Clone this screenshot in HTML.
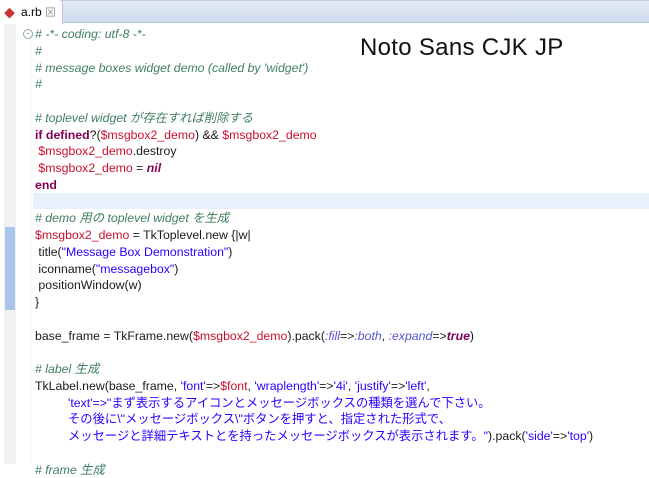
<!DOCTYPE html>
<html><head><meta charset="utf-8"><style>
body{margin:0;width:649px;height:464px;overflow:hidden;background:#fff;position:relative;font-family:"Liberation Sans","Noto Sans CJK JP",sans-serif;}
.tabbar{position:absolute;left:0;top:0;width:649px;height:23px;background:linear-gradient(#e3eaf4,#cfdcec);border-bottom:1px solid #b7c4d6;border-top:1px solid #c5cfdc;box-sizing:border-box}
.tab{position:absolute;left:0;top:0;width:62px;height:24px;background:#fff;border-right:1px solid #b7c4d6;border-radius:0 4px 0 0;font-size:12px;color:#000}
.gut{position:absolute;left:4px;top:24px;width:12px;height:440px;background:#f1f1f1}
.gut2{position:absolute;left:30px;top:24px;width:1px;height:440px;background:#f4f4f4}
.mark{position:absolute;left:5px;top:227px;width:10px;height:83px;background:#a9c6ea}
.hl{position:absolute;left:33px;top:193px;width:616px;height:16px;background:#e8f0fb}
.code{position:absolute;left:35px;top:26px;font-size:12.3px;line-height:16.75px;white-space:pre;color:#1a1a1a;letter-spacing:0}
.c{color:#3f7f5f;font-style:italic}
.k{color:#7f0055;font-weight:bold}
.ki{color:#7f0055;font-weight:bold;font-style:italic}
.v{color:#c8102e}
.s{color:#2a00ff}
.y{color:#5555cc;font-style:italic}
.big{position:absolute;left:360px;top:34px;font-size:24px;color:#111;letter-spacing:0.3px}
.in{display:inline-block;width:33px}
</style></head><body>
<div class="tabbar"></div>
<div class="tab"><span style="position:absolute;left:4px;top:5px;color:#c33;font-size:11px">◆</span><span style="position:absolute;left:21px;top:5px">a.rb</span><span style="position:absolute;left:45px;top:4px;color:#888;font-size:11px">⊠</span></div>
<div class="gut"></div><div class="gut2"></div><div class="mark"></div>
<div class="hl"></div>
<div style="position:absolute;left:23px;top:29px;width:8px;height:8px;border:1px solid #8aa;border-radius:50%;font-size:8px;line-height:8px;text-align:center;color:#566">-</div>
<div class="big">Noto Sans CJK JP</div>
<div class="code"><span class="c"># -*- coding: utf-8 -*-</span>
<span class="c">#</span>
<span class="c"># message boxes widget demo (called by 'widget')</span>
<span class="c">#</span>

<span class="c"># toplevel widget が存在すれば削除する</span>
<span class="k">if defined</span>?(<span class="v">$msgbox2_demo</span>) &amp;&amp; <span class="v">$msgbox2_demo</span>
 <span class="v">$msgbox2_demo</span>.destroy
 <span class="v">$msgbox2_demo</span> = <span class="ki">nil</span>
<span class="k">end</span>

<span class="c"># demo 用の toplevel widget を生成</span>
<span class="v">$msgbox2_demo</span> = TkToplevel.new {|w|
 title(<span class="s">"Message Box Demonstration"</span>)
 iconname(<span class="s">"messagebox"</span>)
 positionWindow(w)
}

base_frame = TkFrame.new(<span class="v">$msgbox2_demo</span>).pack(<span class="y">:fill</span>=&gt;<span class="y">:both</span>, <span class="y">:expand</span>=&gt;<span class="ki">true</span>)

<span class="c"># label 生成</span>
TkLabel.new(base_frame, <span class="s">'font'</span>=&gt;<span class="v">$font</span>, <span class="s">'wraplength'</span>=&gt;<span class="s">'4i'</span>, <span class="s">'justify'</span>=&gt;<span class="s">'left'</span>,
<span class="in"></span><span class="s">'text'=&gt;"まず表示するアイコンとメッセージボックスの種類を選んで下さい。</span>
<span class="in"></span><span class="s">その後に\"メッセージボックス\"ボタンを押すと、指定された形式で、</span>
<span class="in"></span><span class="s">メッセージと詳細テキストとを持ったメッセージボックスが表示されます。"</span>).pack(<span class="s">'side'</span>=&gt;<span class="s">'top'</span>)

<span class="c"># frame 生成</span></div>
</body></html>
